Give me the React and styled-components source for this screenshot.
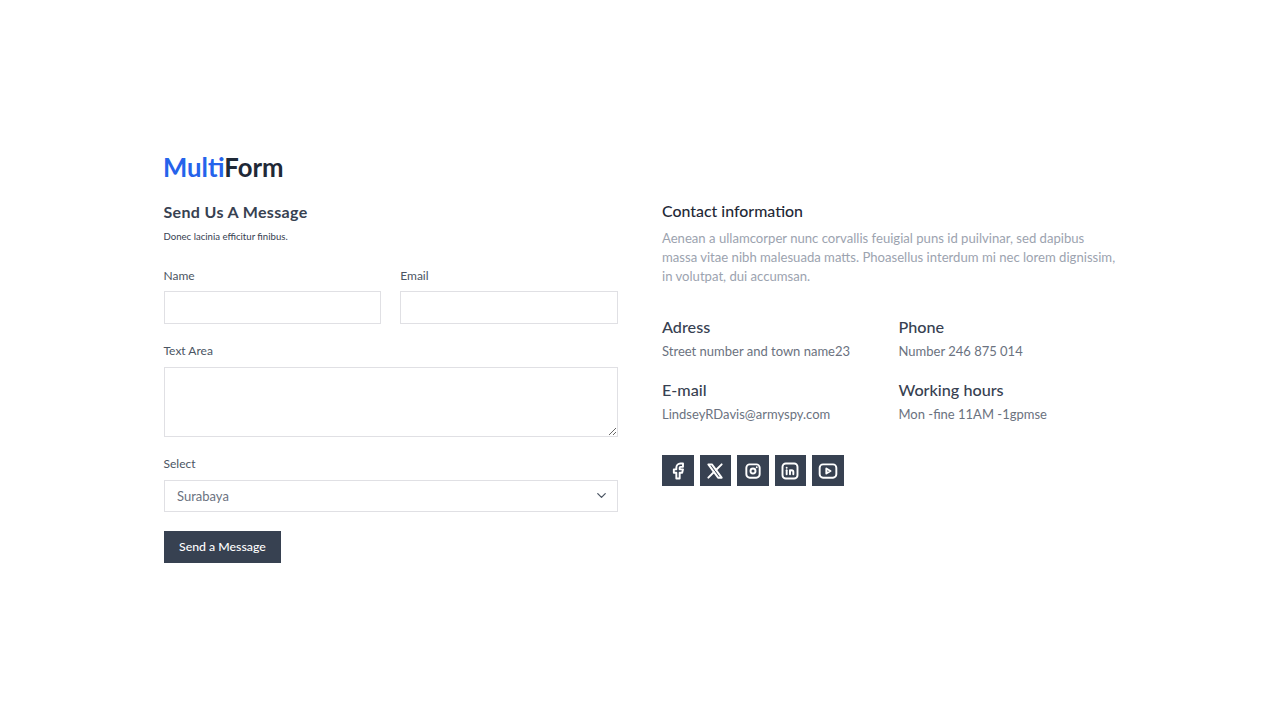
import React from "react";
import styled, { createGlobalStyle } from "styled-components";
import { TbBrandFacebook, TbBrandX, TbBrandInstagram, TbBrandLinkedin, TbBrandYoutube, TbChevronDown } from "react-icons/tb";

const Global = createGlobalStyle`
  html, body { margin: 0; padding: 0; background: #fff; }
  * { box-sizing: border-box; }
  body { font-family: "Lato", "Open Sans", sans-serif; color: #374151; }
`;

const Page = styled.main`
  width: 1280px;
  height: 720px;
  padding: 151px 162px 0 163.5px;
`;
const Logo = styled.div`
  font-size: 25.7px;
  line-height: 32px;
  font-weight: 700;
  color: #1f2937;
  margin: 0 0 16px -0.5px;
  span { color: #2563eb; }
`;
const Columns = styled.div`
  display: grid;
  grid-template-columns: 454.5px 454.5px;
  column-gap: 44px;
`;
const MessageHeading = styled.h2`
  margin: 0;
  font-size: 16px;
  line-height: 26px;
  letter-spacing: 0.35px;
  font-weight: 700;
  color: #374151;
`;
const ContactHeading = styled.h2`
  margin: 0;
  font-size: 15.9px;
  line-height: 24px;
  font-weight: 500;
  color: #1f2937;
`;
const Sub = styled.p`
  margin: 4px 0 0;
  font-size: 9.6px;
  line-height: 16px;
  color: #374151;
`;
const Form = styled.form`
  margin-top: 22.5px;
  display: grid;
  grid-template-columns: 1fr 1fr;
  column-gap: 19px;
  row-gap: 19.5px;
`;
const Field = styled.label`
  display: block;
  grid-column: ${p => p.$wide ? "1 / -1" : "auto"};
`;
const LabelText = styled.span`
  display: block;
  font-size: 12px;
  line-height: 16px;
  margin-bottom: 7.5px;
  color: #4b5563;
`;
const Input = styled.input`
  display: block;
  width: 100%;
  height: 32.5px;
  border: 1px solid #e0e0e4;
  background: #fff;
  outline: none;
`;
const Area = styled.textarea`
  display: block;
  width: 100%;
  height: 70px;
  border: 1px solid #e0e0e4;
  background: #fff;
  outline: none;
`;
const SelectWrap = styled.div`
  position: relative;
`;
const Select = styled.select`
  display: block;
  width: 100%;
  height: 32.5px;
  padding: 0 12.5px;
  border: 1px solid #e0e0e4;
  border-radius: 0;
  background: #fff;
  appearance: none;
  font: inherit;
  font-size: 13px;
  color: #6b7280;
  outline: none;
`;
const Chevron = styled(TbChevronDown)`
  position: absolute;
  right: 9px;
  top: 8.5px;
  width: 15px;
  height: 15px;
  color: #4b5563;
  pointer-events: none;
`;
const Submit = styled.button`
  justify-self: start;
  grid-column: 1 / -1;
  height: 31.5px;
  padding: 0 15.5px;
  margin-top: -0.5px;
  border: 0;
  background: #374151;
  color: #fff;
  font: inherit;
  font-size: 12.3px;
  font-weight: 500;
`;
const Intro = styled.p`
  margin: 6px 0 0;
  font-size: 13.12px;
  line-height: 18.75px;
  color: #9ca3af;
`;
const Details = styled.div`
  margin-top: 29.5px;
  display: grid;
  grid-template-columns: 236.5px 1fr;
  row-gap: 17px;
`;
const DetailTitle = styled.h3`
  margin: 0;
  font-size: 16.2px;
  line-height: 24px;
  font-weight: 500;
  color: #374151;
`;
const DetailText = styled.p`
  margin: 2px 0 0;
  font-size: 13px;
  line-height: 20px;
  color: #6b7280;
`;
const Socials = styled.div`
  margin-top: 31px;
  display: flex;
  gap: 6px;
`;
const Social = styled.a`
  width: 31.5px;
  height: 31.5px;
  display: flex;
  align-items: center;
  justify-content: center;
  background: #374151;
  color: #fff;
  font-size: 20px;
  svg { stroke-width: 2.3; }
`;

const details = [
  ["Adress", "Street number and town name23"],
  ["Phone", "Number 246 875 014"],
  ["E-mail", "LindseyRDavis@armyspy.com"],
  ["Working hours", "Mon -fine 11AM -1gpmse"],
];
const socials = [TbBrandFacebook, TbBrandX, TbBrandInstagram, TbBrandLinkedin, TbBrandYoutube];

export default function App() {
  return (
    <Page>
      <Global />
      <Logo><span>Multi</span>Form</Logo>
      <Columns>
        <section>
          <MessageHeading>Send Us A Message</MessageHeading>
          <Sub>Donec lacinia efficitur finibus.</Sub>
          <Form>
            <Field><LabelText>Name</LabelText><Input /></Field>
            <Field><LabelText>Email</LabelText><Input /></Field>
            <Field $wide><LabelText>Text Area</LabelText><Area /></Field>
            <Field $wide>
              <LabelText>Select</LabelText>
              <SelectWrap>
                <Select defaultValue="Surabaya"><option>Surabaya</option></Select>
                <Chevron />
              </SelectWrap>
            </Field>
            <Submit type="button">Send a Message</Submit>
          </Form>
        </section>
        <section>
          <ContactHeading>Contact information</ContactHeading>
          <Intro>Aenean a ullamcorper nunc corvallis feuigial puns id puilvinar, sed dapibus massa vitae nibh malesuada matts. Phoasellus interdum mi nec lorem dignissim, in volutpat, dui accumsan.</Intro>
          <Details>
            {details.map(([t, v]) => (
              <div key={t}><DetailTitle>{t}</DetailTitle><DetailText>{v}</DetailText></div>
            ))}
          </Details>
          <Socials>
            {socials.map((I, i) => <Social key={i}><I /></Social>)}
          </Socials>
        </section>
      </Columns>
    </Page>
  );
}
